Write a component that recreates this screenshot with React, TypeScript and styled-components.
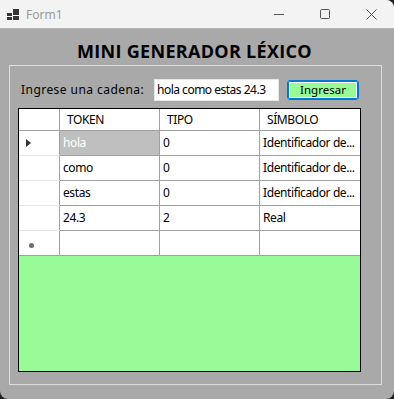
import React from 'react'
import styled, { createGlobalStyle } from 'styled-components'

const GlobalStyle = createGlobalStyle`
  html, body {
    margin: 0;
    padding: 0;
    background: #1e1e1e;
  }
  * {
    box-sizing: border-box;
  }
`

const Window = styled.div`
  width: 394px;
  height: 399px;
  display: flex;
  flex-direction: column;
  background: #a9a9a9;
  border-radius: 0 8px 8px 8px;
  overflow: hidden;
  font-family: 'Noto Sans', 'Liberation Sans', sans-serif;
`

const TitleBar = styled.div`
  height: 29px;
  flex: none;
  display: flex;
  align-items: center;
  background: #f3f3f3;
  border-bottom: 1px solid #b4b4b4;
  padding-left: 7px;
`

const AppIcon = styled.svg`
  width: 12px;
  height: 11px;
  margin-right: 7px;
`

const Caption = styled.span`
  flex: 1;
  font-size: 12px;
  color: #9a9a9a;
`

const CaptionButton = styled.div`
  width: 46px;
  height: 29px;
  display: flex;
  align-items: center;
  justify-content: center;
`

const FormBody = styled.div`
  flex: 1;
  display: flex;
  flex-direction: column;
  padding: 0 12px 14px 9px;
`

const Heading = styled.h1`
  margin: 10px 0 0;
  height: 26px;
  text-align: center;
  font-family: 'Open Sans', 'Noto Sans', sans-serif;
  font-weight: 700;
  font-size: 18px;
  line-height: 24px;
  color: #000;
  letter-spacing: 0.3px;
  padding-right: 2px;
`

const GroupBox = styled.div`
  flex: 1;
  display: flex;
  flex-direction: column;
  border: 1px solid #dcdcdc;
  padding: 12px 20px 12px 8px;
`

const InputRow = styled.div`
  display: flex;
  align-items: center;
  height: 23px;
  padding-left: 3px;
  margin-bottom: 7px;
`

const Label = styled.span`
  font-size: 12px;
  color: #000;
  width: 133px;
  letter-spacing: 0.45px;
`

const TextBox = styled.div`
  width: 125px;
  height: 22px;
  background: #fff;
  border: 1px solid #e6e6e6;
  font-size: 12px;
  letter-spacing: -0.5px;
  line-height: 20px;
  padding-left: 2px;
  color: #000;
  white-space: nowrap;
  overflow: hidden;
`

const Button = styled.button`
  margin-left: 8px;
  width: 72px;
  height: 20px;
  background: #98fb98;
  border: 1px solid #0078d7;
  border-radius: 3px;
  font-family: 'Noto Sans', 'Liberation Sans', sans-serif;
  font-size: 11.5px;
  line-height: 14px;
  padding: 0;
  color: #000;
  box-shadow: inset 0 0 0 1px #0078d7, inset 0 0 0 2px #fff;
`

const Grid = styled.div`
  flex: 1;
  background: #98fb98;
  border: 1px solid #000;
  display: flex;
  flex-direction: column;
`

const Row = styled.div<{ $header?: boolean }>`
  display: grid;
  grid-template-columns: 41px 100px 100px 100px;
  height: ${(p) => (p.$header ? 22 : 25)}px;
  background: #fff;
`

const RowHead = styled.div<{ $last?: boolean }>`
  border-right: 1px solid #a0a0a0;
  border-bottom: 1px solid ${(p) => (p.$last ? '#a0a0a0' : '#e6e6e6')};
  display: flex;
  align-items: center;
  padding-left: 7px;
`

const Cell = styled.div<{ $selected?: boolean; $header?: boolean }>`
  border-right: 1px solid #a0a0a0;
  border-bottom: 1px solid #a0a0a0;
  background: ${(p) => (p.$selected ? '#bfbfbf' : '#fff')};
  color: ${(p) => (p.$selected ? '#fff' : '#000')};
  font-size: 12px;
  line-height: 1;
  letter-spacing: -0.4px;
  display: flex;
  align-items: center;
  padding-left: ${(p) => (p.$header ? 7 : 3)}px;
  white-space: nowrap;
  overflow: hidden;
  &:last-child {
    border-right: none;
  }
`

const Arrow = styled.span`
  width: 0;
  height: 0;
  border-top: 4px solid transparent;
  border-bottom: 4px solid transparent;
  border-left: 5px solid #333;
`

const NewRowMark = styled.span`
  margin-left: 3px;
  margin-top: 4px;
  width: 5px;
  height: 5px;
  border-radius: 50%;
  background: #6c6c6c;
`

const rows = [
  { token: 'hola', tipo: '0', simbolo: 'Identificador de...' },
  { token: 'como', tipo: '0', simbolo: 'Identificador de...' },
  { token: 'estas', tipo: '0', simbolo: 'Identificador de...' },
  { token: '24.3', tipo: '2', simbolo: 'Real' },
]

export default function App() {
  return (
    <>
      <GlobalStyle />
      <Window>
        <TitleBar>
          <AppIcon viewBox="0 0 12 11">
            <rect x="0" y="4" width="5" height="3" fill="#333" />
            <rect x="6" y="0" width="6" height="6" fill="#333" />
            <rect x="0" y="8" width="5" height="3" fill="#333" />
            <rect x="6" y="7" width="6" height="4" fill="#333" />
          </AppIcon>
          <Caption>Form1</Caption>
          <CaptionButton>
            <svg width="10" height="10" viewBox="0 0 10 10">
              <line x1="0" y1="5.5" x2="10" y2="5.5" stroke="#555" strokeWidth="1" />
            </svg>
          </CaptionButton>
          <CaptionButton>
            <svg width="10" height="10" viewBox="0 0 10 10">
              <rect x="0.5" y="0.5" width="9" height="9" rx="1" fill="none" stroke="#555" strokeWidth="1" />
            </svg>
          </CaptionButton>
          <CaptionButton>
            <svg width="11" height="11" viewBox="0 0 11 11">
              <path d="M0.5 0.5 L10.5 10.5 M10.5 0.5 L0.5 10.5" stroke="#555" strokeWidth="1" />
            </svg>
          </CaptionButton>
        </TitleBar>
        <FormBody>
          <Heading>MINI GENERADOR LÉXICO</Heading>
          <GroupBox>
            <InputRow>
              <Label>Ingrese una cadena:</Label>
              <TextBox>hola como estas 24.3</TextBox>
              <Button>Ingresar</Button>
            </InputRow>
            <Grid>
              <Row $header>
                <RowHead $last />
                <Cell $header>TOKEN</Cell>
                <Cell $header>TIPO</Cell>
                <Cell $header>SÍMBOLO</Cell>
              </Row>
              {rows.map((r, i) => (
                <Row key={r.token}>
                  <RowHead>{i === 0 && <Arrow />}</RowHead>
                  <Cell $selected={i === 0}>{r.token}</Cell>
                  <Cell>{r.tipo}</Cell>
                  <Cell>{r.simbolo}</Cell>
                </Row>
              ))}
              <Row>
                <RowHead $last>
                  <NewRowMark />
                </RowHead>
                <Cell />
                <Cell />
                <Cell />
              </Row>
            </Grid>
          </GroupBox>
        </FormBody>
      </Window>
    </>
  )
}
